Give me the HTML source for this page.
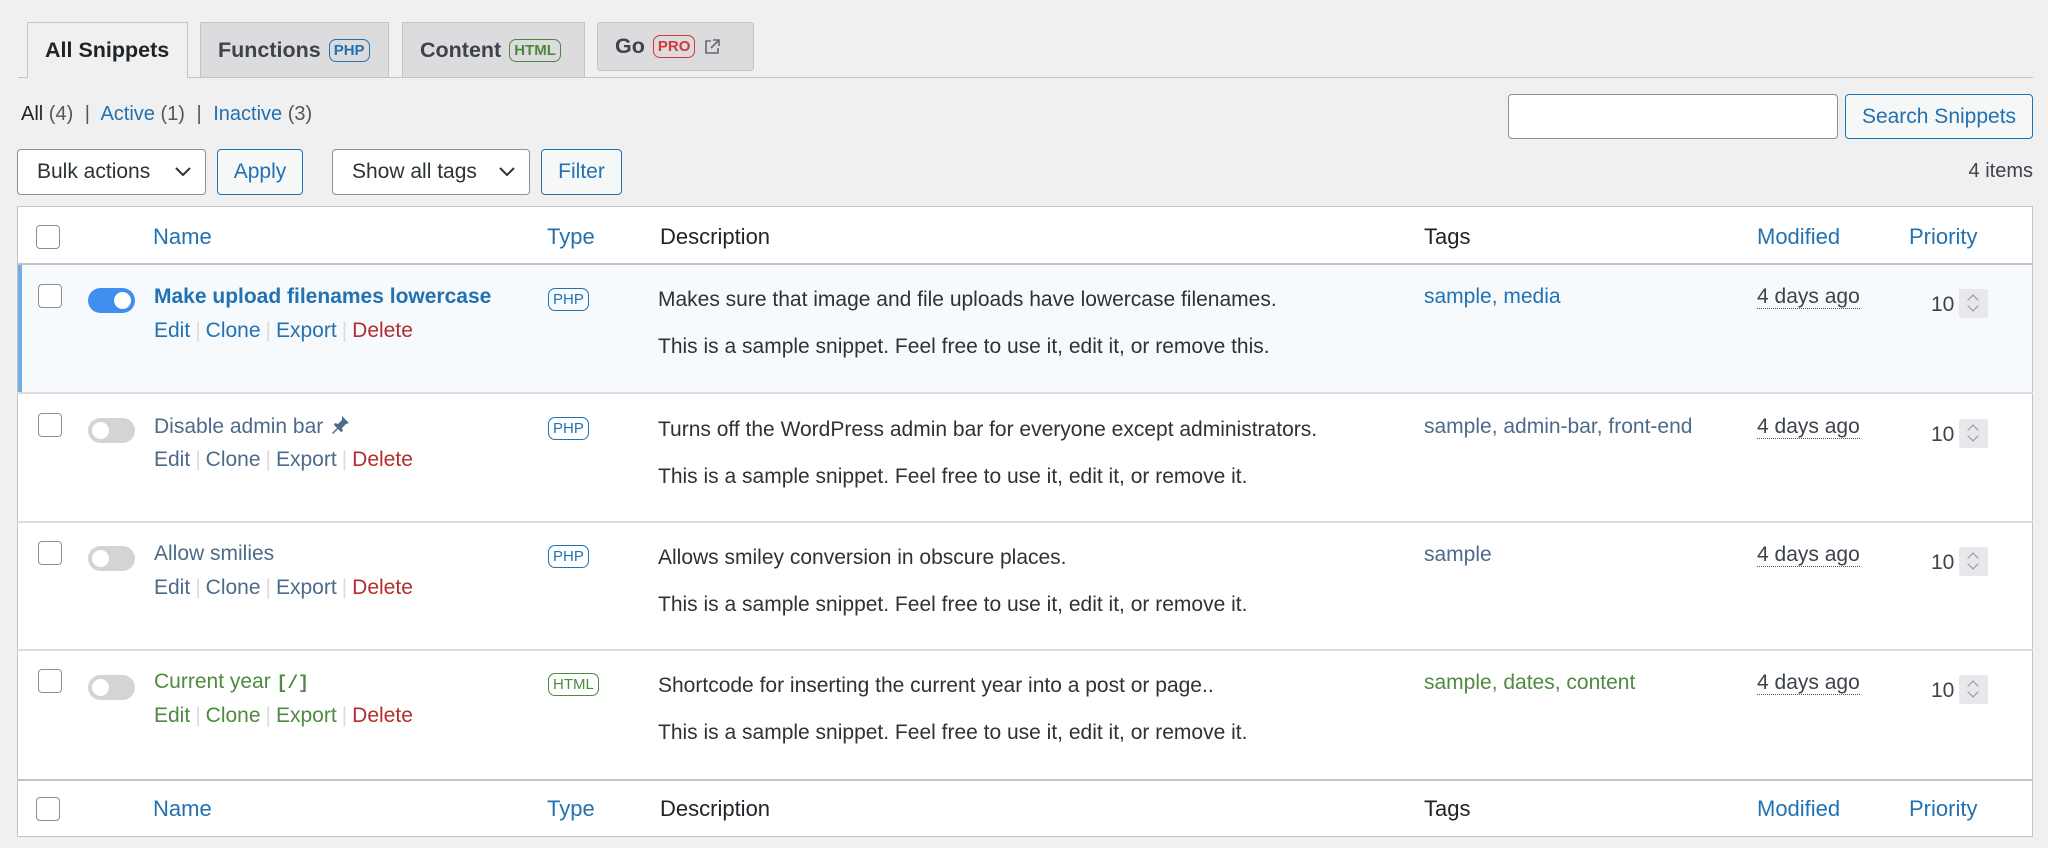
<!DOCTYPE html>
<html><head><meta charset="utf-8"><style>
*{box-sizing:border-box;margin:0;padding:0}
body{width:2048px;height:848px;background:#f0f0f1;font-family:"Liberation Sans",sans-serif;color:#1d2327;position:relative;overflow:hidden;font-size:21px}
.a{position:absolute;white-space:nowrap}
.tab{position:absolute;top:22px;height:55px;border:1px solid #c3c4c7;border-bottom:none;background:#dcdcde;font-weight:bold;font-size:21.5px;color:#3c434a;display:flex;align-items:center;padding-left:17px;gap:8px}
.badge{font-size:15px;font-weight:bold;border:1.5px solid;border-radius:7px;padding:2px 4px;line-height:17px}
.blue{color:#2271b1}
.btn{position:absolute;border:1.5px solid #2271b1;border-radius:4px;color:#2271b1;background:#f6f7f7;font-size:21px;display:flex;align-items:center;justify-content:center}
.sel{position:absolute;border:1.5px solid #8c8f94;border-radius:4px;background:#fff;font-size:21px;display:flex;align-items:center;padding-left:19px;color:#2c3338}
.cb{position:absolute;width:24px;height:24px;border:1.5px solid #8c8f94;border-radius:4px;background:#fff;left:36px}
.tg{position:absolute;left:88px;width:47px;height:25px;border-radius:13px;background:#d4d4d4}
.tg::after{content:"";position:absolute;top:4px;left:4px;width:17px;height:17px;border-radius:50%;background:#fff}
.tg.on{background:#3f8ff0}.tg.on::after{left:26px}
.h{font-size:22px}
.sep{color:#dcdcde;margin:0 5px}
.del{color:#b32d2e}
.mod{border-bottom:1.5px dotted #555;color:#3c434a}
.sp{position:absolute;left:1959px;width:29px;height:29px;background:#e8e8ec;border-radius:2px}
.sp::before,.sp::after{content:"";position:absolute;left:10px;width:7px;height:7px;border:solid #8c8f94;border-width:1.5px 0 0 1.5px}
.sp::before{top:7px;transform:rotate(45deg)}
.sp::after{top:13px;transform:rotate(225deg)}
.line{position:absolute;left:17px;width:2016px;height:1.5px;background:#dcdcde}
</style></head><body>
<div class="a" style="left:18px;top:77px;width:2015px;height:1px;background:#c3c4c7"></div>
<div class="tab" style="left:27px;width:161px;height:56px;background:#f0f0f1;color:#1d2327;z-index:2">All Snippets</div>
<div class="tab" style="left:200px;width:189px">Functions <span class="badge blue">PHP</span></div>
<div class="tab" style="left:402px;width:183px">Content <span class="badge" style="color:#4a8a3a">HTML</span></div>
<div class="tab" style="left:597px;width:157px;height:49px;border-bottom:1px solid #c3c4c7;border-radius:3px">Go <span class="badge" style="color:#d63638">PRO</span>
<svg width="18" height="18" viewBox="0 0 18 18" fill="none" stroke="#646970" stroke-width="1.6"><path d="M8 3H3v12h12v-5M10 2h6v6M16 2L8 10"/></svg></div>

<div class="a" style="left:21px;top:103px;font-size:20px;color:#50575e"><b style="color:#1d2327;font-weight:normal">All</b> (4) <span style="margin:0 6px">|</span> <span class="blue">Active</span> (1) <span style="margin:0 6px">|</span> <span class="blue">Inactive</span> (3)</div>

<div class="a" style="left:1508px;top:94px;width:330px;height:45px;background:#fff;border:1.5px solid #8c8f94;border-radius:4px"></div>
<div class="btn" style="left:1845px;top:94px;width:188px;height:45px">Search Snippets</div>

<div class="sel" style="left:17px;top:149px;width:189px;height:46px">Bulk actions<svg style="position:absolute;right:14px;top:17px" width="16" height="10" viewBox="0 0 16 10" fill="none" stroke="#2c3338" stroke-width="2"><path d="M1 1l7 7 7-7"/></svg></div>
<div class="btn" style="left:217px;top:149px;width:86px;height:46px">Apply</div>
<div class="sel" style="left:332px;top:149px;width:198px;height:46px">Show all tags<svg style="position:absolute;right:14px;top:17px" width="16" height="10" viewBox="0 0 16 10" fill="none" stroke="#2c3338" stroke-width="2"><path d="M1 1l7 7 7-7"/></svg></div>
<div class="btn" style="left:541px;top:149px;width:81px;height:46px">Filter</div>
<div class="a" style="right:15px;top:160px;font-size:20px;color:#3c434a">4 items</div>

<div class="a" style="left:17px;top:206px;width:2016px;height:631px;background:#fff;border:1.5px solid #c3c4c7"></div>
<div class="a" style="left:18px;top:264px;width:2014px;height:128px;background:#f6fafd;border-left:4px solid #72aee6"></div>
<div class="line" style="top:263px;background:#c3c4c7"></div>
<div class="line" style="top:392px"></div>
<div class="line" style="top:521px"></div>
<div class="line" style="top:649px"></div>
<div class="line" style="top:779px;background:#c3c4c7"></div>

<div class="cb" style="top:225px"></div>
<div class="a h blue" style="left:153px;top:224px">Name</div>
<div class="a h blue" style="left:547px;top:224px">Type</div>
<div class="a h" style="left:660px;top:224px">Description</div>
<div class="a h" style="left:1424px;top:224px">Tags</div>
<div class="a h blue" style="left:1757px;top:224px">Modified</div>
<div class="a h blue" style="left:1909px;top:224px">Priority</div>

<div class="cb" style="top:797px"></div>
<div class="a h blue" style="left:153px;top:796px">Name</div>
<div class="a h blue" style="left:547px;top:796px">Type</div>
<div class="a h" style="left:660px;top:796px">Description</div>
<div class="a h" style="left:1424px;top:796px">Tags</div>
<div class="a h blue" style="left:1757px;top:796px">Modified</div>
<div class="a h blue" style="left:1909px;top:796px">Priority</div>

<!-- row 1 -->
<div class="cb" style="top:284px;left:38px"></div>
<div class="tg on" style="top:288px"></div>
<div class="a blue" style="left:154px;top:285px;font-weight:bold">Make upload filenames lowercase</div>
<div class="a blue" style="left:154px;top:319px">Edit<span class="sep">|</span>Clone<span class="sep">|</span>Export<span class="sep">|</span><span class="del">Delete</span></div>
<div class="a" style="left:548px;top:286px"><span class="badge blue" style="font-weight:normal">PHP</span></div>
<div class="a" style="left:658px;top:288px;color:#2c3338">Makes sure that image and file uploads have lowercase filenames.</div>
<div class="a" style="left:658px;top:335px;color:#2c3338">This is a sample snippet. Feel free to use it, edit it, or remove this.</div>
<div class="a blue" style="left:1424px;top:285px">sample, media</div>
<div class="a" style="left:1757px;top:285px"><span class="mod">4 days ago</span></div>
<div class="a" style="left:1931px;top:293px;font-size:21px;color:#3c434a">10</div>
<div class="sp" style="top:289px"></div>

<!-- row 2 -->
<div class="cb" style="top:413px;left:38px"></div>
<div class="tg" style="top:418px"></div>
<div class="a" style="left:154px;top:414px;color:#4d6a8a">Disable admin bar <svg width="24" height="22" viewBox="0 0 24 22" style="vertical-align:-3px"><path d="M13 2l7 7-3 1-4 4 1 3-2 1-3-3-5 5-1-1 5-5-3-3 1-2 3 1 4-4z" fill="#4d6a8a"/></svg></div>
<div class="a" style="left:154px;top:448px;color:#4d6a8a">Edit<span class="sep">|</span>Clone<span class="sep">|</span>Export<span class="sep">|</span><span class="del">Delete</span></div>
<div class="a" style="left:548px;top:415px"><span class="badge blue" style="font-weight:normal">PHP</span></div>
<div class="a" style="left:658px;top:418px;color:#2c3338">Turns off the WordPress admin bar for everyone except administrators.</div>
<div class="a" style="left:658px;top:465px;color:#2c3338">This is a sample snippet. Feel free to use it, edit it, or remove it.</div>
<div class="a" style="left:1424px;top:415px;color:#4d6a8a">sample, admin-bar, front-end</div>
<div class="a" style="left:1757px;top:415px"><span class="mod">4 days ago</span></div>
<div class="a" style="left:1931px;top:423px;font-size:21px;color:#3c434a">10</div>
<div class="sp" style="top:419px"></div>

<!-- row 3 -->
<div class="cb" style="top:541px;left:38px"></div>
<div class="tg" style="top:546px"></div>
<div class="a" style="left:154px;top:542px;color:#4d6a8a">Allow smilies</div>
<div class="a" style="left:154px;top:576px;color:#4d6a8a">Edit<span class="sep">|</span>Clone<span class="sep">|</span>Export<span class="sep">|</span><span class="del">Delete</span></div>
<div class="a" style="left:548px;top:543px"><span class="badge blue" style="font-weight:normal">PHP</span></div>
<div class="a" style="left:658px;top:546px;color:#2c3338">Allows smiley conversion in obscure places.</div>
<div class="a" style="left:658px;top:593px;color:#2c3338">This is a sample snippet. Feel free to use it, edit it, or remove it.</div>
<div class="a" style="left:1424px;top:543px;color:#4d6a8a">sample</div>
<div class="a" style="left:1757px;top:543px"><span class="mod">4 days ago</span></div>
<div class="a" style="left:1931px;top:551px;font-size:21px;color:#3c434a">10</div>
<div class="sp" style="top:547px"></div>

<!-- row 4 -->
<div class="cb" style="top:669px;left:38px"></div>
<div class="tg" style="top:675px"></div>
<div class="a" style="left:154px;top:670px;color:#4e8a41">Current year <b style="font-family:'Liberation Mono',monospace;font-size:18px">[/]</b></div>
<div class="a" style="left:154px;top:704px;color:#4e8a41">Edit<span class="sep">|</span>Clone<span class="sep">|</span>Export<span class="sep">|</span><span class="del">Delete</span></div>
<div class="a" style="left:548px;top:671px"><span class="badge" style="font-weight:normal;color:#4e8a41">HTML</span></div>
<div class="a" style="left:658px;top:674px;color:#2c3338">Shortcode for inserting the current year into a post or page..</div>
<div class="a" style="left:658px;top:721px;color:#2c3338">This is a sample snippet. Feel free to use it, edit it, or remove it.</div>
<div class="a" style="left:1424px;top:671px;color:#4e8a41">sample, dates, content</div>
<div class="a" style="left:1757px;top:671px"><span class="mod">4 days ago</span></div>
<div class="a" style="left:1931px;top:679px;font-size:21px;color:#3c434a">10</div>
<div class="sp" style="top:675px"></div>
</body></html>
